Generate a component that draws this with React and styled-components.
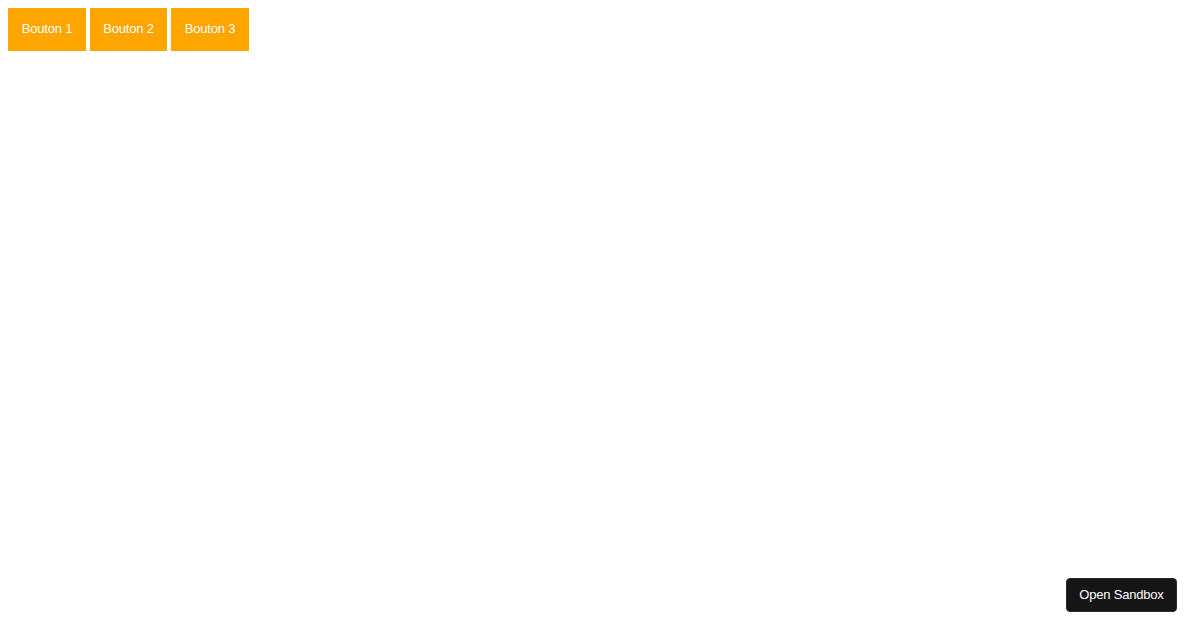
import styled, { createGlobalStyle } from "styled-components";

const GlobalStyle = createGlobalStyle`
  body {
    margin: 8px;
    background: #ffffff;
    font-family: "Liberation Sans", Arial, sans-serif;
  }
`;

const ButtonRow = styled.div`
  display: flex;
  gap: 4px;
`;

const Button = styled.button`
  background-color: orange;
  color: #ffffff;
  border: none;
  width: ${(props) => props.width || 78}px;
  height: 43px;
  padding: 0 0 2px;
  font-family: "Liberation Sans", Arial, sans-serif;
  font-size: 13px;
  letter-spacing: -0.2px;
  cursor: pointer;
`;

const SandboxLink = styled.a`
  position: fixed;
  right: 23px;
  bottom: 18px;
  width: 111px;
  height: 34px;
  padding-bottom: 2px;
  display: flex;
  align-items: center;
  justify-content: center;
  box-sizing: border-box;
  background: #151515;
  border: 1px solid #2a2a2a;
  border-radius: 4px;
  color: #ffffff;
  font-family: "Liberation Sans", Arial, sans-serif;
  font-size: 13px;
  letter-spacing: -0.2px;
  text-decoration: none;
`;

const App = () => {
  return (
    <>
      <GlobalStyle />
      <ButtonRow>
        <Button width={78}>Bouton 1</Button>
        <Button width={77}>Bouton 2</Button>
        <Button width={78}>Bouton 3</Button>
      </ButtonRow>
      <SandboxLink href="#">Open Sandbox</SandboxLink>
    </>
  );
};

export default App;
